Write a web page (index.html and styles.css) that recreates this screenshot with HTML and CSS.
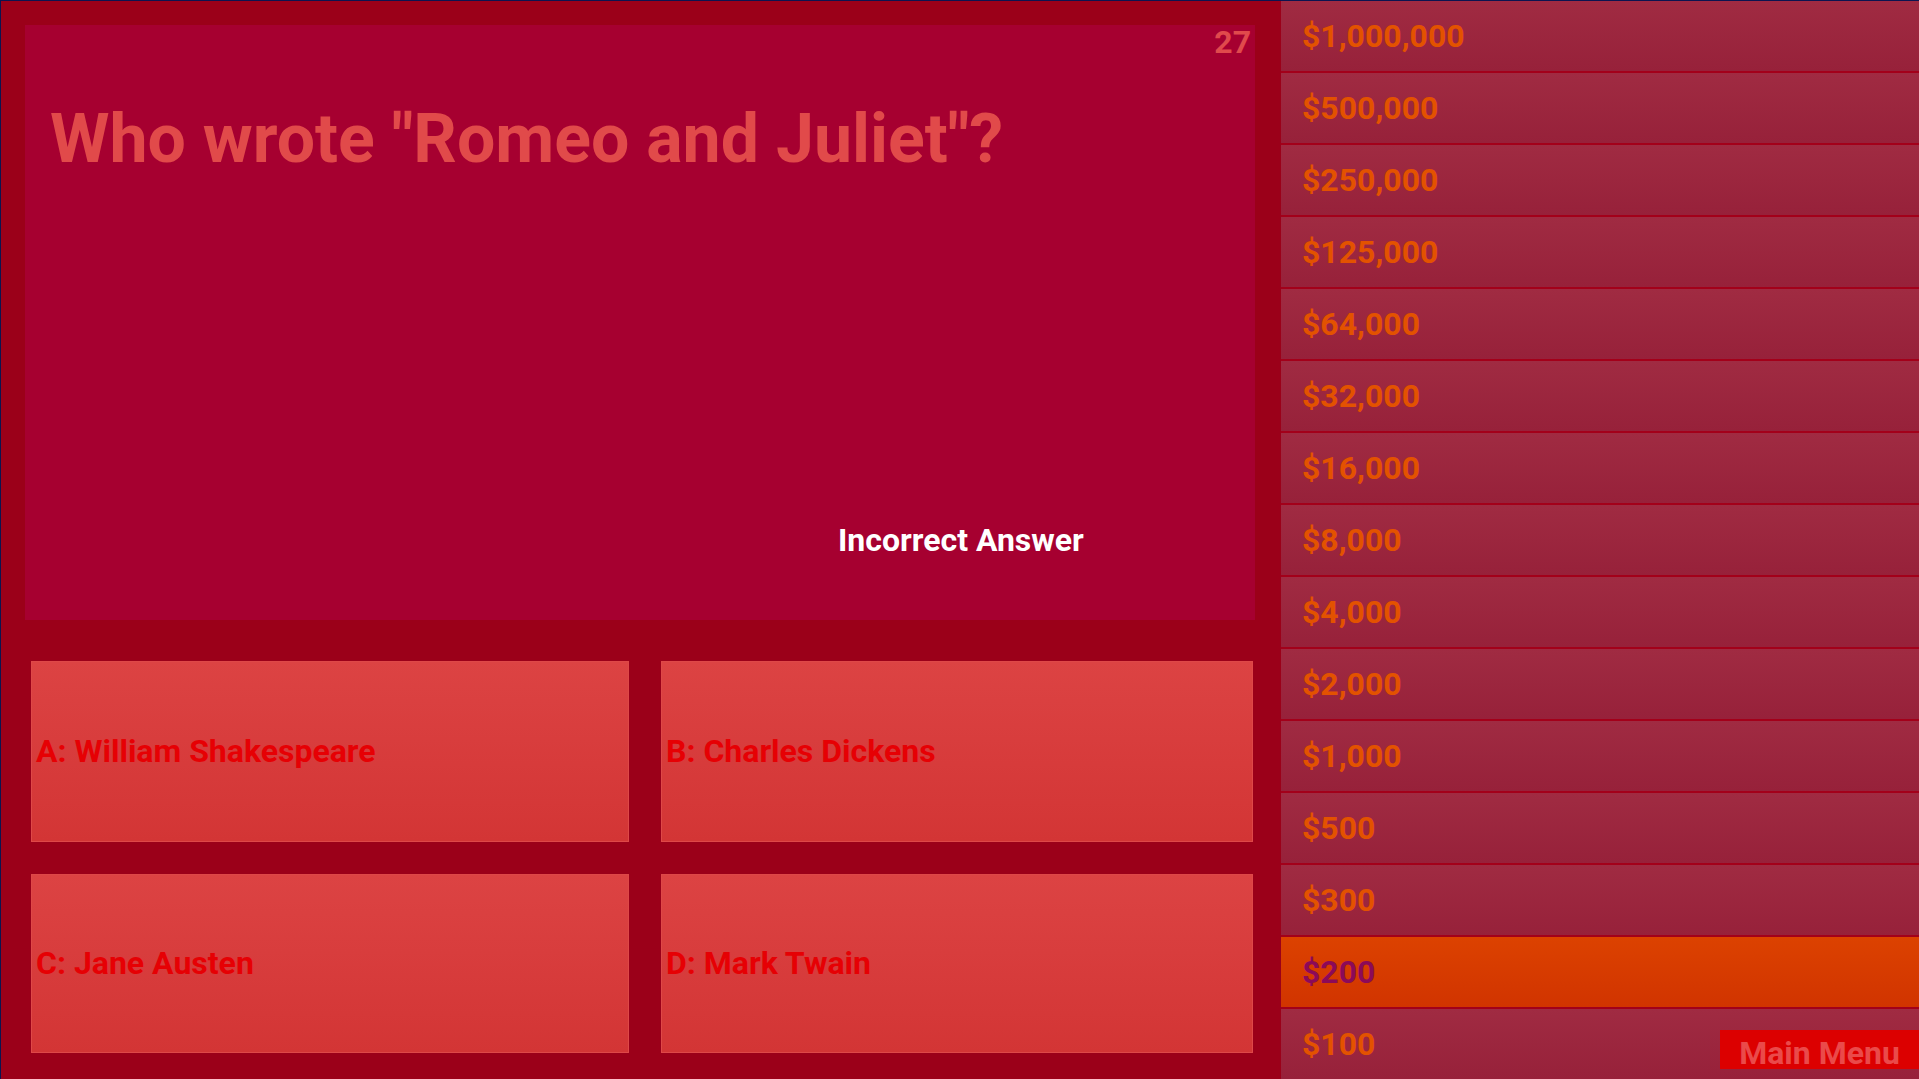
FILE: index.html
```html
<!DOCTYPE html>
<html lang="en">
<head>
<meta charset="utf-8">
<title>Millionaire</title>
<link rel="stylesheet" href="styles.css">
</head>
<body>
<div class="app">
  <main class="stage">
    <section class="question-box">
      <span class="timer">27</span>
      <h1 class="question">Who wrote "Romeo and Juliet"?</h1>
      <div class="feedback">Incorrect Answer</div>
    </section>
    <section class="answers">
      <div class="answer">A: William Shakespeare</div>
      <div class="answer">B: Charles Dickens</div>
      <div class="answer">C: Jane Austen</div>
      <div class="answer">D: Mark Twain</div>
    </section>
  </main>
  <aside class="ladder">
    <div class="rung">$1,000,000</div>
    <div class="rung">$500,000</div>
    <div class="rung">$250,000</div>
    <div class="rung">$125,000</div>
    <div class="rung">$64,000</div>
    <div class="rung">$32,000</div>
    <div class="rung">$16,000</div>
    <div class="rung">$8,000</div>
    <div class="rung">$4,000</div>
    <div class="rung">$2,000</div>
    <div class="rung">$1,000</div>
    <div class="rung">$500</div>
    <div class="rung">$300</div>
    <div class="rung rung-current">$200</div>
    <div class="rung">$100</div>
    <button class="menu-btn">Main Menu</button>
  </aside>
</div>
</body>
</html>
```

FILE: styles.css
```css
* { box-sizing: border-box; }

html, body {
  margin: 0;
  padding: 0;
  height: 100%;
}

body {
  background: #9b0019;
  font-family: Roboto, "Liberation Sans", Arial, sans-serif;
  overflow: hidden;
}

.app {
  display: grid;
  grid-template-columns: 1280px 1fr;
  width: 100vw;
  height: 100vh;
  border-top: 1px solid #0c1450;
  border-left: 1px solid #0c1450;
  background: #9b0019;
}

.stage {
  display: flex;
  flex-direction: column;
  padding: 24px 26px 26px 24px;
}

.question-box {
  position: relative;
  height: 595px;
  background: #a60030;
  display: flex;
  flex-direction: column;
}

.timer {
  position: absolute;
  top: -1px;
  right: 4px;
  font-size: 32px;
  font-weight: 700;
  color: #e04a4c;
  line-height: 36px;
}

.question {
  margin: 73px 0 0 25px;
  font-size: 68px;
  font-weight: 700;
  line-height: 82px;
  color: #e14a4a;
}

.feedback {
  margin: auto 0 62px 813px;
  font-size: 32px;
  font-weight: 700;
  line-height: 36px;
  color: #ffffff;
}

.answers {
  display: grid;
  grid-template-columns: 598px 592px;
  grid-template-rows: 181px 179px;
  column-gap: 32px;
  row-gap: 32px;
  margin: 41px 0 0 6px;
}

.answer {
  display: flex;
  align-items: center;
  padding-left: 4px;
  padding-bottom: 1px;
  background: linear-gradient(#dc4343, #d33535);
  border: 1px solid #de4848;
  font-size: 32px;
  font-weight: 700;
  color: #e60004;
}

.ladder {
  position: relative;
  display: grid;
  grid-template-rows: repeat(15, 1fr);
  row-gap: 2px;
  background: #a3001a;
}

.rung {
  display: flex;
  align-items: center;
  padding-left: 21px;
  background: linear-gradient(#a02b42, #97213a);
  font-size: 32px;
  font-weight: 700;
  color: #e35200;
}

.rung-current {
  background: linear-gradient(#dc4200, #d13400);
  color: #8c0a58;
}

.menu-btn {
  position: absolute;
  right: 0;
  bottom: 10px;
  width: 199px;
  height: 39px;
  padding: 8px 0 0 0;
  border: 0;
  background: #dc0000;
  color: #ea4a4a;
  font-family: Roboto, "Liberation Sans", Arial, sans-serif;
  font-size: 32px;
  font-weight: 700;
  line-height: 31px;
  text-align: center;
}
```
